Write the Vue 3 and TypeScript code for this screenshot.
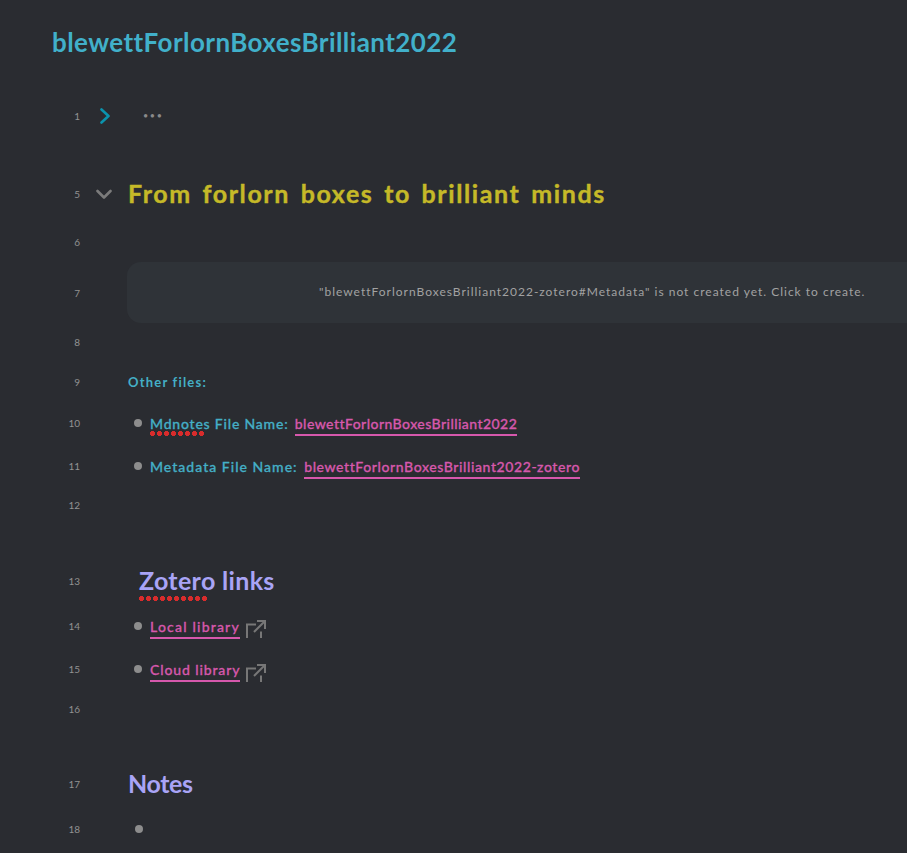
<script setup lang="ts">
interface Link { label: string }
const zoteroLinks: Link[] = [{ label: 'Local library' }, { label: 'Cloud library' }]
</script>

<template>
  <main class="page">
    <h1 class="title">blewettForlornBoxesBrilliant2022</h1>

    <div class="row r1">
      <span class="num">1</span>
      <span class="fold">
        <svg width="12" height="16" viewBox="0 0 12 16" fill="none"><path d="M2.5 1.5 9.5 8l-7 6.5" stroke="#0b93ad" stroke-width="2.6" stroke-linecap="round" stroke-linejoin="round" /></svg>
      </span>
      <span class="more">•••</span>
    </div>

    <div class="row r5">
      <span class="num">5</span>
      <span class="fold">
        <svg width="16" height="11" viewBox="0 0 16 11" fill="none"><path d="M1.5 2 8 8.5 14.5 2" stroke="#7b7b7b" stroke-width="2.6" stroke-linecap="round" stroke-linejoin="round" /></svg>
      </span>
      <h2 class="h-yellow">From forlorn boxes to brilliant minds</h2>
    </div>

    <div class="row r6"><span class="num">6</span></div>

    <div class="row r7">
      <span class="num">7</span>
      <span class="fold"></span>
      <div class="callout">"blewettForlornBoxesBrilliant2022-zotero#Metadata" is not created yet. Click to create.</div>
    </div>

    <div class="row r8"><span class="num">8</span></div>

    <div class="row r9">
      <span class="num">9</span>
      <span class="fold"></span>
      <span class="other">Other files:</span>
    </div>

    <div class="row r10">
      <span class="num">10</span>
      <span class="fold"></span>
      <span class="bullet"></span>
      <span class="item"><span class="typo t-md">Mdnotes</span> File Name: </span>
      <a class="link l1">blewettForlornBoxesBrilliant2022</a>
    </div>

    <div class="row r11">
      <span class="num">11</span>
      <span class="fold"></span>
      <span class="bullet"></span>
      <span class="item">Metadata File Name: </span>
      <a class="link l2">blewettForlornBoxesBrilliant2022-zotero</a>
    </div>

    <div class="row r12"><span class="num">12</span></div>

    <div class="row r13">
      <span class="num">13</span>
      <span class="fold"></span>
      <h2 class="h-purple zotero"><span class="typo t-zo">Zotero</span> links</h2>
    </div>

    <div v-for="(l, i) in zoteroLinks" :key="l.label" class="row" :class="i === 0 ? 'r14' : 'r15'">
      <span class="num">{{ 14 + i }}</span>
      <span class="fold"></span>
      <span class="bullet"></span>
      <a class="link small">{{ l.label }}</a>
      <svg class="ext" width="20" height="18" viewBox="0 0 20 18" fill="none" stroke="#777" stroke-width="2">
        <path d="M1 18V4.5H10" />
        <path d="M11 1h8v8" />
        <path d="M19 1 8 12" />
        <path d="M15 11.5V18" />
      </svg>
    </div>

    <div class="row r16"><span class="num">16</span></div>

    <div class="row r17">
      <span class="num">17</span>
      <span class="fold"></span>
      <h2 class="h-purple notes">Notes</h2>
    </div>

    <div class="row r18">
      <span class="num">18</span>
      <span class="fold"></span>
      <span class="bullet b18"></span>
    </div>
  </main>
</template>

<style scoped>
.page {
  width: 907px;
  height: 853px;
  overflow: hidden;
  background: #2a2c31;
  font-family: "Lato", "Open Sans", sans-serif;
  color: #44afc6;
}
.title {
  margin: 0;
  height: 86px;
  padding-left: 52px;
  line-height: 84px;
  font-size: 26px;
  font-weight: 700;
  letter-spacing: 0.42px;
  color: #41b0ca;
  white-space: nowrap;
}
.row {
  display: flex;
  align-items: center;
  white-space: pre;
}
.num {
  width: 80px;
  flex: none;
  text-align: right;
  font-size: 10px;
  color: #929292;
}
.fold {
  width: 48px;
  flex: none;
  display: flex;
  align-items: center;
  padding-left: 16px;
  box-sizing: border-box;
}
.r1 { height: 60px; }
.r1 .fold { padding-left: 19px; }
.more {
  margin-left: 15px;
  margin-top: -2px;
  font-size: 9px;
  letter-spacing: 1.6px;
  color: #8a8a8a;
}
.r5 { height: 44px; margin-top: 26px; }
.r6 { height: 40px; margin-top: 6px; }
.r7 { height: 61px; }
.r8 { height: 38px; }
.r9 { height: 42px; }
.r10 { height: 40px; }
.r11 { height: 40px; margin-top: 3px; }
.r12 { height: 38px; }
.r13 { height: 46px; margin-top: 34px; }
.r14 { height: 40px; margin-top: 2px; }
.r15 { height: 40px; margin-top: 3px; }
.r16 { height: 40px; }
.r17 { height: 40px; margin-top: 35px; }
.r18 { height: 40px; margin-top: 5px; }
h2 { margin: 0; padding-bottom: 2px; font-weight: 700; }
.h-yellow {
  font-size: 25px;
  letter-spacing: 1.6px;
  word-spacing: 3px;
  color: #c5b928;
  -webkit-text-stroke: 0.4px #c5b928;
}
.h-purple {
  font-size: 25px;
  color: #a9a4f6;
}
.zotero { margin-left: 11px; letter-spacing: 0.33px; }
.notes { letter-spacing: -0.4px; }
.callout {
  flex: 1;
  height: 61px;
  line-height: 60px;
  margin-left: -1px;
  padding-left: 192px;
  border-radius: 14px 0 0 14px;
  background: #2f3338;
  font-size: 12px;
  letter-spacing: 1px;
  color: #a2a2a2;
}
.other {
  font-size: 13px;
  font-weight: 700;
  letter-spacing: 1.2px;
  color: #44afc6;
}
.bullet {
  width: 8px;
  height: 8px;
  flex: none;
  margin: 0 8px 0 6px;
  border-radius: 50%;
  background: #8d8d8d;
}
.b18 { margin-left: 7px; }
.item {
  font-size: 14px;
  letter-spacing: 0.8px;
  font-weight: 500;
  color: #44afc6;
  -webkit-text-stroke: 0.3px #44afc6;
}
.r11 .item { letter-spacing: 1.02px; }
.typo { position: relative; }
.typo::after {
  content: "";
  position: absolute;
  left: 0;
  height: 5px;
  background-image: radial-gradient(circle at 2.5px 2.5px, #d92c2c 2.3px, transparent 2.7px);
  background-size: 7px 5px;
  background-repeat: repeat-x;
}
.t-md::after { width: 54px; bottom: -4px; }
.t-zo::after { width: 68px; bottom: -6px; }
.link {
  margin: 4px 0 0 2px;
  padding-bottom: 2px;
  border-bottom: 2px solid #d658ac;
  font-size: 14px;
  letter-spacing: 0.45px;
  font-weight: 500;
  color: #d658ac;
  -webkit-text-stroke: 0.3px #d658ac;
}
.l2 { letter-spacing: 0.6px; }
.link.small {
  margin: 5px 0 0;
  padding-bottom: 2px;
}
.r14 .link { letter-spacing: 1.2px; }
.r15 .link { letter-spacing: 0.88px; }
.ext { margin-left: 6px; flex: none; }
.r14 .ext { margin-top: 6px; }
.r15 .ext { margin-top: 7px; }
</style>
